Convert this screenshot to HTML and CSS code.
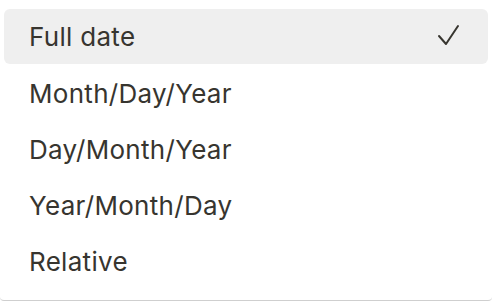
FILE: index.html
```html
<!DOCTYPE html>
<html lang="en">
<head>
<meta charset="UTF-8" />
<title>Date format</title>
<link rel="stylesheet" href="styles.css">
</head>
<body>
  <div class="menu">
    <div class="menu-item selected">
      <span class="label">Full date</span>
      <svg class="check" width="24" height="24" viewBox="0 0 24 24">
        <polyline points="3,12 10,20 22,2" fill="none" stroke="#37352f" stroke-width="2" stroke-linecap="round" stroke-linejoin="round"/>
      </svg>
    </div>
    <div class="menu-item"><span class="label">Month/Day/Year</span></div>
    <div class="menu-item"><span class="label">Day/Month/Year</span></div>
    <div class="menu-item"><span class="label">Year/Month/Day</span></div>
    <div class="menu-item"><span class="label">Relative</span></div>
  </div>
</body>
</html>
```

FILE: styles.css
```css
body {
  margin: 0;
  background: #fff;
  font-family: Inter, "Noto Sans", sans-serif;
  color: #37352f;
}
.menu {
  height: 301px;
  box-sizing: border-box;
  padding: 9px 4px 0;
  border-bottom: 1px solid #cfcfcf;
  border-radius: 0 0 4px 4px;
}
.menu-item {
  display: flex;
  align-items: center;
  justify-content: space-between;
  height: 56px;
  padding: 0 28px 0 25px;
  border-radius: 6px;
  font-size: 26px;
  letter-spacing: 0.3px;
}
.menu-item.selected {
  height: 55px;
  margin-bottom: 1px;
  background: #efefef;
}
.check {
  display: block;
  margin-top: -2px;
}
```
